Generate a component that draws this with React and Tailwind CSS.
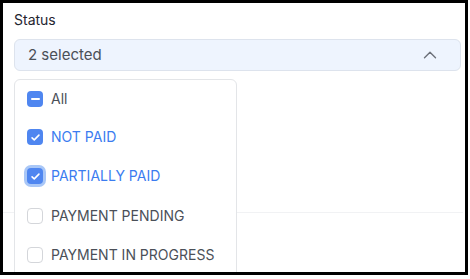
import React from "react";

const Check = () => (
  <svg viewBox="0 0 16 16" className="w-[11px] h-[11px]" fill="none" stroke="white" strokeWidth="2.3" strokeLinecap="round" strokeLinejoin="round">
    <path d="M3 8.5l3.2 3L13 4.5" />
  </svg>
);

function Row({ label, state, focus, h }) {
  const checked = state === "checked";
  const indet = state === "indet";
  const active = checked;
  return (
    <div className={"flex items-center pl-[12px] gap-[8px] " + h}>
      <div
        className={
          "w-[16px] h-[16px] rounded-[4px] flex items-center justify-center shrink-0 " +
          (checked || indet
            ? "bg-[#4f86f0]"
            : "border border-[#d4d6da] bg-white") +
          (focus ? " ring-[3px] ring-[#a9c7f7]" : "")
        }
      >
        {checked && <Check />}
        {indet && <div className="w-[9px] h-[2px] bg-white rounded-[1px]" />}
      </div>
      <span
        className={
          "text-[14px] leading-none " +
          (active ? "text-[#3b7cf0]" : "text-[#4b5058]")
        }
      >
        {label}
      </span>
    </div>
  );
}

export default function App() {
  return (
    <div
      className="w-[468px] h-[275px] border-[3px] border-black bg-white relative overflow-hidden"
      style={{ fontFamily: "Inter, 'Noto Sans', sans-serif" }}
    >
      <div className="pl-[11px] pr-[4px] pt-[7px]">
        <div className="text-[14px] leading-[20px] text-[#1f2530]">Status</div>
        <div className="mt-[9px] h-[32px] w-[447px] rounded-[6px] border border-[#dde3ed] bg-[#eef4fe] flex items-center justify-between pl-[13px] pr-[19px]">
          <span className="text-[15px] text-[#4b5058]">2 selected</span>
          <svg viewBox="0 0 24 24" className="w-[22px] h-[22px]" fill="none" stroke="#6b7079" strokeWidth="1.5" strokeLinecap="round" strokeLinejoin="round">
            <path d="m18 15-6-6-6 6" />
          </svg>
        </div>
      </div>
      <div className="mt-[141px] h-px w-[460px] bg-[#f1f2f4]" />
      <div className="absolute left-[11px] top-[76px] w-[223px] h-[220px] rounded-[6px] border border-[#e3e5e8] bg-white">
        <Row label="All" state="indet" h="h-[38px]" />
        <Row label="NOT PAID" state="checked" h="h-[38px]" />
        <Row label="PARTIALLY PAID" state="checked" focus h="h-[40px]" />
        <Row label="PAYMENT PENDING" state="none" h="h-[39px]" />
        <Row label="PAYMENT IN PROGRESS" state="none" h="h-[40px]" />
      </div>
    </div>
  );
}
